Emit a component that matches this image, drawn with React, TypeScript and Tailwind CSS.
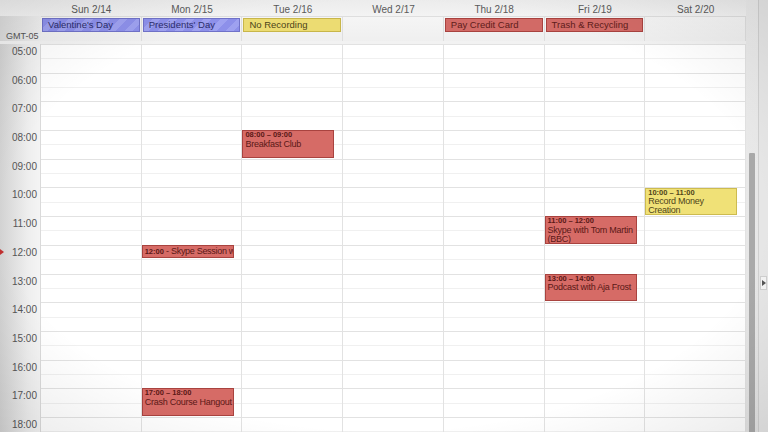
import React from 'react'

const HOUR = 28.7
const START = 5

const days = ['Sun 2/14', 'Mon 2/15', 'Tue 2/16', 'Wed 2/17', 'Thu 2/18', 'Fri 2/19', 'Sat 2/20']
const hours = Array.from({ length: 14 }, (_, i) => `${String(START + i).padStart(2, '0')}:00`)

type AllDay = { title: string; kind: 'blue' | 'yellow' | 'red' } | null

const allDay: AllDay[] = [
  { title: "Valentine's Day", kind: 'blue' },
  { title: "Presidents' Day", kind: 'blue' },
  { title: 'No Recording', kind: 'yellow' },
  null,
  { title: 'Pay Credit Card', kind: 'red' },
  { title: 'Trash & Recycling', kind: 'red' },
  null,
]

type Ev = { day: number; start: number; end: number; time: string; lines: string[]; kind: 'red' | 'yellow'; short?: boolean }

const events: Ev[] = [
  { day: 2, start: 8, end: 9, time: '08:00 – 09:00', lines: ['Breakfast Club'], kind: 'red' },
  { day: 1, start: 12, end: 12.5, time: '12:00', lines: ['Skype Session w'], kind: 'red', short: true },
  { day: 6, start: 10, end: 11, time: '10:00 – 11:00', lines: ['Record Money', 'Creation'], kind: 'yellow' },
  { day: 5, start: 11, end: 12, time: '11:00 – 12:00', lines: ['Skype with Tom Martin', '(BBC)'], kind: 'red' },
  { day: 5, start: 13, end: 14, time: '13:00 – 14:00', lines: ['Podcast with Aja Frost'], kind: 'red' },
  { day: 1, start: 17, end: 18, time: '17:00 – 18:00', lines: ['Crash Course Hangout'], kind: 'red' },
]

const allDayClass = {
  blue: 'bg-[repeating-linear-gradient(135deg,#8d90ea_0px,#8d90ea_6px,#9ea1f0_6px,#9ea1f0_12px)] border-[#7072c8] text-[#2c2d6a]',
  yellow: 'bg-[#ecdc72] border-[#c8b64a] text-[#4d4418]',
  red: 'bg-[#d26a66] border-[#a8423f] text-[#5e1c1a]',
}

const evClass = {
  red: 'bg-[#d66b66] border-[#a9433f] text-[#5a1816]',
  yellow: 'bg-[#f0e177] border-[#cdbb4f] text-[#4f4519]',
}

export default function App() {
  return (
    <div className="relative w-[768px] h-[432px] overflow-hidden bg-white font-['Liberation_Sans',Arial,sans-serif]">
      <div className="flex h-full">
        <div className="w-[746px] flex flex-col">
          {/* day names */}
          <div className="grid grid-cols-[41px_repeat(7,1fr)] h-[16px] bg-[linear-gradient(#ececec,#f3f3f3)]">
            <div />
            {days.map((d) => (
              <div key={d} className="text-center text-[10px] leading-[20px] text-[#5a5a5a]">
                {d}
              </div>
            ))}
          </div>
          {/* all-day row */}
          <div className="grid grid-cols-[41px_repeat(7,1fr)] h-[25px] bg-[#f2f2f2]">
            <div className="text-[9px] text-[#555] pl-[6px] pt-[14px] bg-[linear-gradient(90deg,#dadada,#f0f0f0)]">GMT-05</div>
            {allDay.map((a, i) => (
              <div key={i} className="border border-[#dedede] border-l-0 first:border-l bg-[linear-gradient(#f5f5f5,#efefef)] px-[1px] pt-[1px]">
                {a && (
                  <div className={`h-[14px] border text-[9.5px] leading-[12px] pl-[5px] whitespace-nowrap overflow-hidden ${allDayClass[a.kind]}`}>
                    {a.title}
                  </div>
                )}
              </div>
            ))}
          </div>
          <div className="h-[3px] bg-[#f2f2f2]" />
          {/* time grid */}
          <div className="relative grid grid-cols-[41px_repeat(7,1fr)] flex-1 overflow-hidden">
            <div className="bg-[linear-gradient(90deg,#d2d2d2,#eeeeee_70%,#f4f4f4)] border-r border-[#dadada]">
              {hours.map((h) => (
                <div key={h} style={{ height: HOUR }} className="text-right pr-[3px] text-[10px] leading-[14px] text-[#555] pt-[1px]">
                  {h}
                </div>
              ))}
            </div>
            {days.map((d, di) => (
              <div key={d} className="relative border-r border-[#e2e2e2]">
                {hours.map((h) => (
                  <div key={h} style={{ height: HOUR }} className="border-t border-[#e2e2e2] flex flex-col">
                    <div className="flex-1 border-b border-[#f0f0f0]" />
                    <div className="flex-1" />
                  </div>
                ))}
                {events
                  .filter((e) => e.day === di)
                  .map((e) => (
                    <div
                      key={e.time + e.day}
                      style={{ top: (e.start - START) * HOUR, height: e.short ? 13 : (e.end - e.start) * HOUR - 1 }}
                      className={`absolute left-0 w-[92px] border pl-[2px] pr-0 overflow-hidden ${evClass[e.kind]}`}
                    >
                      {e.short ? (
                        <div className="text-[9px] leading-[11px] whitespace-nowrap tracking-[-0.3px]">
                          <span className="font-bold text-[7.5px] tracking-normal">{e.time}</span> - {e.lines[0]}
                        </div>
                      ) : (
                        <>
                          <div className="font-bold text-[7.5px] leading-[8.5px]">{e.time}</div>
                          {e.lines.map((l) => (
                            <div key={l} className="text-[9px] leading-[9px] whitespace-nowrap tracking-[-0.25px]">
                              {l}
                            </div>
                          ))}
                        </>
                      )}
                    </div>
                  ))}
              </div>
            ))}
            {/* now marker */}
            <div
              style={{ top: (12 - START) * HOUR + 4 }}
              className="absolute left-0 w-0 h-0 border-y-[3px] border-y-transparent border-l-[4px] border-l-[#c03030]"
            />
          </div>
        </div>
        {/* scrollbar */}
        <div className="w-[12px] bg-[linear-gradient(#ebebeb,#e4e4e4)] flex flex-col">
          <div className="h-[153px]" />
          <div className="flex-1 mx-[3px] bg-[#a9a9a9] rounded-t-[1px]" />
        </div>
        {/* side toggle */}
        <div className="w-[10px] bg-[#e6e6e6] border-l border-[#d0d0d0] flex items-center justify-center">
          <div className="mt-[134px] w-[7px] h-[14px] bg-[#f4f4f4] border border-[#cfcfcf] flex items-center justify-center">
            <div className="w-0 h-0 border-y-[3px] border-y-transparent border-l-[4px] border-l-[#555]" />
          </div>
        </div>
      </div>
      <div className="pointer-events-none absolute inset-0 bg-[radial-gradient(ellipse_at_center,transparent_70%,rgba(0,0,0,0.08)_100%)]" />
    </div>
  )
}
